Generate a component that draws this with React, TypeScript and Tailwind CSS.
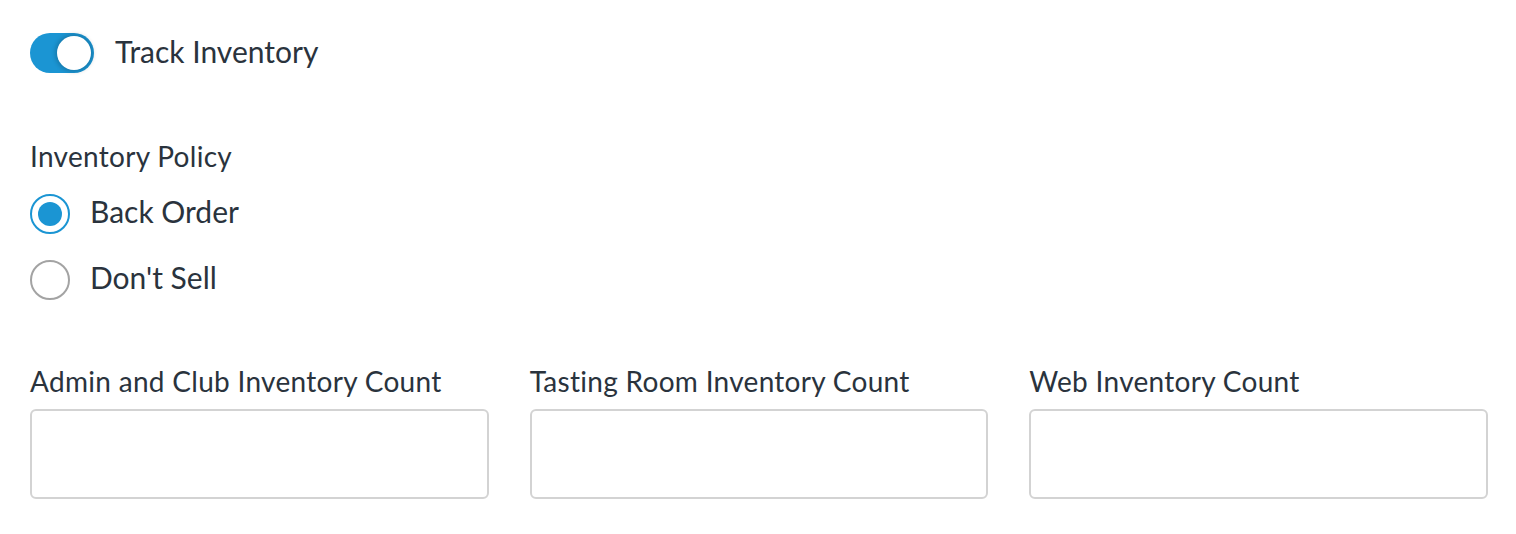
import { useState } from "react";

const counts = ["Admin and Club Inventory Count", "Tasting Room Inventory Count", "Web Inventory Count"];

export default function App() {
  const [track, setTrack] = useState(true);
  const [policy, setPolicy] = useState("back");

  return (
    <main className="min-h-screen bg-white px-[30px] pr-[28px] pt-[33px] text-[#2a333d] font-['Lato',sans-serif] text-[28px] tracking-[0.3px]">
      <div className="flex items-center gap-[21px] h-[40px]">
        <button
          onClick={() => setTrack(!track)}
          className={`relative w-[64px] h-[40px] rounded-full ${track ? "bg-[#1b95d3]" : "bg-gray-300"}`}
        >
          <span
            className={`absolute top-[3px] w-[34px] h-[34px] rounded-full bg-white shadow-[0_0_4px_2px_rgba(0,0,0,0.18)] ${track ? "right-[3px]" : "left-[3px]"}`}
          />
        </button>
        <span className="text-[30px] tracking-normal leading-[36px] pb-[4px]">Track Inventory</span>
      </div>

      <p className="mt-[65px] leading-[36px]">Inventory Policy</p>
      <div className="mt-[20px] flex flex-col gap-[26px]">
        {[
          { id: "back", label: "Back Order" },
          { id: "dont", label: "Don't Sell" },
        ].map((o) => (
          <label key={o.id} className="flex items-center gap-[20px] h-[40px] cursor-pointer" onClick={() => setPolicy(o.id)}>
            <span
              className={`w-[40px] h-[40px] rounded-full border-2 flex items-center justify-center ${policy === o.id ? "border-[#1b95d3]" : "border-[#a3a3a3]"}`}
            >
              {policy === o.id && <span className="w-[24px] h-[24px] rounded-full bg-[#1b95d3]" />}
            </span>
            <span className="text-[30px] tracking-normal leading-[36px] pb-[6px]">{o.label}</span>
          </label>
        ))}
      </div>

      <div className="mt-[63px] grid grid-cols-3 gap-[41px]">
        {counts.map((c) => (
          <div key={c} className="flex flex-col">
            <span className="leading-[36px] mb-[10px]">{c}</span>
            <input className="h-[90px] w-full rounded-[6px] border-2 border-[#d3d3d3] px-4 outline-none" />
          </div>
        ))}
      </div>
    </main>
  );
}
